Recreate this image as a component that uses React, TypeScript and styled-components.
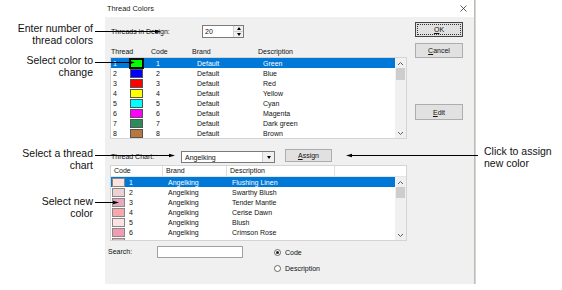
import styled, { createGlobalStyle } from 'styled-components'

const GlobalStyle = createGlobalStyle`
  body {
    margin: 0;
    background: #fff;
  }
`

const uiFont = `'Liberation Sans', Arial, sans-serif`

type Thread = { id: number; color: string; brand: string; name: string }

const threads: Thread[] = [
  { id: 1, color: '#00ff00', brand: 'Default', name: 'Green' },
  { id: 2, color: '#0000ff', brand: 'Default', name: 'Blue' },
  { id: 3, color: '#ff0000', brand: 'Default', name: 'Red' },
  { id: 4, color: '#ffff00', brand: 'Default', name: 'Yellow' },
  { id: 5, color: '#00ffff', brand: 'Default', name: 'Cyan' },
  { id: 6, color: '#ff00ff', brand: 'Default', name: 'Magenta' },
  { id: 7, color: '#2e8b5c', brand: 'Default', name: 'Dark green' },
  { id: 8, color: '#b8783c', brand: 'Default', name: 'Brown' },
]

const chartColors: Thread[] = [
  { id: 1, color: '#fbe4e0', brand: 'Angelking', name: 'Flushing Linen' },
  { id: 2, color: '#ecd2d2', brand: 'Angelking', name: 'Swarthy Blush' },
  { id: 3, color: '#e8a8c0', brand: 'Angelking', name: 'Tender Mantle' },
  { id: 4, color: '#f8a8aa', brand: 'Angelking', name: 'Cerise Dawn' },
  { id: 5, color: '#fce2e0', brand: 'Angelking', name: 'Blush' },
  { id: 6, color: '#f09cb4', brand: 'Angelking', name: 'Crimson Rose' },
  { id: 7, color: '#e8b0b8', brand: 'Angelking', name: 'Sangria Sob' },
]

const Page = styled.div`
  position: relative;
  width: 562px;
  height: 290px;
  display: flex;
  background: #fff;
  font-family: ${uiFont};
  overflow: hidden;
`

const NoteColumn = styled.div<{ $side: 'left' | 'right' }>`
  width: ${(p) => (p.$side === 'left' ? '105px' : 'auto')};
  flex: ${(p) => (p.$side === 'left' ? 'none' : '1')};
  display: flex;
  flex-direction: column;
  align-items: ${(p) => (p.$side === 'left' ? 'flex-end' : 'flex-start')};
  padding: ${(p) => (p.$side === 'left' ? '0 12px 0 0' : '0 0 0 9px')};
  box-sizing: border-box;
`

const Note = styled.div<{ $top: number; $align?: 'left' | 'right' }>`
  margin-top: ${(p) => p.$top}px;
  font-size: 10.5px;
  line-height: 12px;
  color: #111;
  text-align: ${(p) => p.$align ?? 'right'};
  white-space: nowrap;
`

const Leaders = styled.svg`
  position: absolute;
  left: 0;
  top: 0;
  pointer-events: none;
`

const Dialog = styled.div`
  width: 370px;
  height: 284px;
  display: flex;
  flex-direction: column;
  border-right: 1px solid #bdbdbd;
  box-shadow: 1px 0 0 #d8d4c8;
  box-sizing: border-box;
  font-size: 7px;
  color: #111;
`

const TitleBar = styled.div`
  height: 17px;
  flex: none;
  background: #fff;
  display: flex;
  align-items: center;
  justify-content: space-between;
  padding: 0 7px 0 2px;
  font-size: 7.4px;
  color: #222;
`

const Body = styled.div`
  flex: 1;
  background: #f0f0f0;
  display: grid;
  grid-template-columns: 297px 48px;
  column-gap: 8px;
  align-items: start;
  padding: 5px 0 0 5px;
`

const MainColumn = styled.div`
  display: flex;
  flex-direction: column;
`

const ButtonColumn = styled.div`
  display: flex;
  flex-direction: column;
`

const FieldRow = styled.div<{ $top: number; $height: number }>`
  margin-top: ${(p) => p.$top}px;
  height: ${(p) => p.$height}px;
  display: flex;
  align-items: center;
`

const FieldLabel = styled.span<{ $width: number; $shift?: number }>`
  width: ${(p) => p.$width}px;
  margin-left: ${(p) => p.$shift ?? 1}px;
  flex: none;
  white-space: nowrap;
`

const SpinBox = styled.div`
  width: 42px;
  height: 13px;
  box-sizing: border-box;
  border: 1px solid #7a7a7a;
  background: #fff;
  display: flex;
  align-items: center;
  justify-content: space-between;
  padding-left: 2px;
`

const SpinButtons = styled.div`
  width: 9px;
  height: 11px;
  display: flex;
  flex-direction: column;
  border-left: 1px solid #d0d0d0;
  background: #f0f0f0;
`

const SpinHalf = styled.div`
  flex: 1;
  display: flex;
  align-items: center;
  justify-content: center;
  & + & {
    border-top: 1px solid #d0d0d0;
  }
`

const Arrow = styled.span<{ $dir: 'up' | 'down' }>`
  width: 0;
  height: 0;
  border-left: 2.5px solid transparent;
  border-right: 2.5px solid transparent;
  ${(p) =>
    p.$dir === 'up'
      ? 'border-bottom: 3px solid #000;'
      : 'border-top: 3px solid #000;'}
`

const ColumnHeads = styled.div`
  margin-top: 9px;
  height: 10px;
  line-height: 10px;
  display: grid;
  grid-template-columns: 40px 41px 66px 1fr;
  padding-left: 1px;
`

const ListBox = styled.div<{ $height: number; $top?: number }>`
  height: ${(p) => p.$height}px;
  margin-top: ${(p) => p.$top ?? 0}px;
  box-sizing: border-box;
  border: 1px solid #d4d4d4;
  background: #fff;
  display: flex;
  flex-direction: column;
  overflow: hidden;
`

const ListBody = styled.div`
  flex: 1;
  display: flex;
  min-height: 0;
`

const Rows = styled.div`
  flex: 1;
  overflow: hidden;
`

const ThreadRow = styled.div<{ $selected?: boolean }>`
  height: 10px;
  display: grid;
  grid-template-columns: 17px 26px 41px 66px 1fr;
  align-items: center;
  padding-left: 2px;
  background: ${(p) => (p.$selected ? '#0078d7' : 'transparent')};
  color: ${(p) => (p.$selected ? '#fff' : '#111')};
  white-space: nowrap;
`

const Swatch = styled.span<{ $focus?: boolean; $soft?: boolean }>`
  display: block;
  width: 13px;
  height: 9px;
  box-sizing: border-box;
  border: 1px solid ${(p) => (p.$focus ? '#000' : p.$soft ? '#888' : '#555')};
  outline: ${(p) => (p.$focus ? '1px solid #111' : 'none')};
`

const ScrollBar = styled.div`
  width: 11px;
  flex: none;
  background: #f0f0f0;
  display: flex;
  flex-direction: column;
  align-items: center;
`

const ScrollArrow = styled.div`
  height: 10px;
  display: flex;
  align-items: center;
  justify-content: center;
`

const Thumb = styled.div<{ $height: number }>`
  width: 9px;
  height: ${(p) => p.$height}px;
  background: #cdcdcd;
`

const Spacer = styled.div`
  flex: 1;
`

const Combo = styled.div`
  width: 94px;
  height: 12px;
  align-self: flex-end;
  box-sizing: border-box;
  border: 1px solid #7a7a7a;
  background: #fff;
  display: flex;
  align-items: center;
  justify-content: space-between;
  padding-left: 3px;
`

const ComboButton = styled.div`
  width: 11px;
  height: 10px;
  border-left: 1px solid #d0d0d0;
  background: #f0f0f0;
  display: flex;
  align-items: center;
  justify-content: center;
`

const Button = styled.div<{
  $top?: number
  $left?: number
  $width?: number
  $height?: number
  $default?: boolean
}>`
  margin-top: ${(p) => p.$top ?? 0}px;
  margin-left: ${(p) => p.$left ?? 0}px;
  align-self: flex-start;
  width: ${(p) => p.$width ?? 48}px;
  height: ${(p) => p.$height ?? 15}px;
  flex: none;
  box-sizing: border-box;
  border: 1px solid ${(p) => (p.$default ? '#444' : '#adadad')};
  background: #e1e1e1;
  display: flex;
  align-items: center;
  justify-content: center;
  padding: 1px;
  & > span {
    flex: 1;
    align-self: stretch;
    display: flex;
    align-items: center;
    justify-content: center;
    outline: ${(p) => (p.$default ? '1px dotted #333' : 'none')};
    outline-offset: -1px;
  }
`

const GridHead = styled.div`
  height: 10px;
  flex: none;
  display: flex;
  border-bottom: 1px solid #e5e5e5;
  line-height: 10px;
`

const HeadCell = styled.div<{ $width: number }>`
  width: ${(p) => p.$width}px;
  flex: none;
  box-sizing: border-box;
  border-right: 1px solid #e0e0e0;
  padding-left: 3px;
`

const ChartRow = styled.div<{ $selected?: boolean }>`
  height: 10px;
  display: grid;
  grid-template-columns: 51px 64px 1fr;
  align-items: center;
  padding-left: 1px;
  background: ${(p) => (p.$selected ? '#0078d7' : 'transparent')};
  color: ${(p) => (p.$selected ? '#fff' : '#111')};
  white-space: nowrap;
  & > span {
    padding-left: 5px;
  }
`

const CodeCell = styled.div`
  display: flex;
  align-items: center;
  gap: 4px;
`

const TextInput = styled.div`
  width: 86px;
  height: 12px;
  box-sizing: border-box;
  border: 1px solid #a0a0a0;
  background: #fff;
`

const RadioGroup = styled.div`
  margin-left: 31px;
  align-self: flex-start;
  margin-top: 1px;
  display: flex;
  flex-direction: column;
  gap: 6px;
`

const RadioOption = styled.div`
  display: flex;
  align-items: center;
  gap: 4px;
  height: 10px;
`

const RadioDot = styled.span<{ $checked?: boolean }>`
  width: 7px;
  height: 7px;
  box-sizing: border-box;
  border-radius: 50%;
  border: 1px solid #666;
  background: #fff;
  display: flex;
  align-items: center;
  justify-content: center;
  &::after {
    content: '';
    width: 3px;
    height: 3px;
    border-radius: 50%;
    background: ${(p) => (p.$checked ? '#222' : 'transparent')};
  }
`

const Chevron = ({ dir }: { dir: 'up' | 'down' }) => (
  <svg width="7" height="5" viewBox="0 0 7 5">
    <path
      d={dir === 'up' ? 'M1 4 L3.5 1.5 L6 4' : 'M1 1 L3.5 3.5 L6 1'}
      fill="none"
      stroke="#606060"
      strokeWidth="1"
    />
  </svg>
)

const CloseIcon = () => (
  <svg width="7" height="7" viewBox="0 0 7 7">
    <path d="M0.5 0.5 L6.5 6.5 M6.5 0.5 L0.5 6.5" stroke="#333" strokeWidth="0.8" />
  </svg>
)

const Leader = ({ x1, x2, y }: { x1: number; x2: number; y: number }) => {
  const dir = x2 > x1 ? 1 : -1
  return (
    <g>
      <line x1={x1} y1={y} x2={x2 - dir * 3} y2={y} stroke="#000" strokeWidth="1" />
      <path d={`M${x2} ${y} L${x2 - dir * 6} ${y - 1.8} L${x2 - dir * 6} ${y + 1.8} Z`} fill="#000" />
    </g>
  )
}

const App = () => {
  return (
    <Page>
      <GlobalStyle />
      <NoteColumn $side="left">
        <Note $top={22}>
          Enter number of
          <br />
          thread colors
        </Note>
        <Note $top={8}>
          Select color to
          <br />
          change
        </Note>
        <Note $top={69}>
          Select a thread
          <br />
          chart
        </Note>
        <Note $top={24}>
          Select new
          <br />
          color
        </Note>
      </NoteColumn>

      <Dialog>
        <TitleBar>
          <span>Thread Colors</span>
          <CloseIcon />
        </TitleBar>
        <Body>
          <MainColumn>
            <FieldRow $top={3} $height={13}>
              <FieldLabel $width={91}>Threads in Design:</FieldLabel>
              <SpinBox>
                <span>20</span>
                <SpinButtons>
                  <SpinHalf>
                    <Arrow $dir="up" />
                  </SpinHalf>
                  <SpinHalf>
                    <Arrow $dir="down" />
                  </SpinHalf>
                </SpinButtons>
              </SpinBox>
            </FieldRow>

            <ColumnHeads>
              <span>Thread</span>
              <span>Code</span>
              <span>Brand</span>
              <span>Description</span>
            </ColumnHeads>

            <ListBox $height={82}>
              <ListBody>
                <Rows>
                  {threads.map((t, i) => (
                    <ThreadRow key={t.id} $selected={i === 0}>
                      <span>{t.id}</span>
                      <Swatch $focus={i === 0} style={{ background: t.color }} />
                      <span>{t.id}</span>
                      <span>{t.brand}</span>
                      <span>{t.name}</span>
                    </ThreadRow>
                  ))}
                </Rows>
                <ScrollBar>
                  <ScrollArrow>
                    <Chevron dir="up" />
                  </ScrollArrow>
                  <Thumb $height={12} />
                  <Spacer />
                  <ScrollArrow>
                    <Chevron dir="down" />
                  </ScrollArrow>
                </ScrollBar>
              </ListBody>
            </ListBox>

            <FieldRow $top={10} $height={14}>
              <FieldLabel $width={70}>Thread Chart:</FieldLabel>
              <Combo>
                <span>Angelking</span>
                <ComboButton>
                  <Arrow $dir="down" />
                </ComboButton>
              </Combo>
              <Button $left={10} $width={47} $height={13}>
                <span>
                  <u>A</u>ssign
                </span>
              </Button>
            </FieldRow>

            <ListBox $height={76} $top={2}>
              <GridHead>
                <HeadCell $width={52}>Code</HeadCell>
                <HeadCell $width={64}>Brand</HeadCell>
                <HeadCell $width={108}>Description</HeadCell>
              </GridHead>
              <ListBody>
                <Rows>
                  {chartColors.map((c, i) => (
                    <ChartRow key={c.id} $selected={i === 0}>
                      <CodeCell>
                        <Swatch $soft style={{ background: c.color }} />
                        <b style={{ fontWeight: 400 }}>{c.id}</b>
                      </CodeCell>
                      <span>{c.brand}</span>
                      <span>{c.name}</span>
                    </ChartRow>
                  ))}
                </Rows>
                <ScrollBar>
                  <ScrollArrow>
                    <Chevron dir="up" />
                  </ScrollArrow>
                  <Thumb $height={11} />
                  <Spacer />
                  <ScrollArrow>
                    <Chevron dir="down" />
                  </ScrollArrow>
                </ScrollBar>
              </ListBody>
            </ListBox>

            <FieldRow $top={5} $height={28} style={{ alignItems: 'flex-start' }}>
              <FieldLabel $width={49} $shift={-2} style={{ lineHeight: '12px' }}>
                Search:
              </FieldLabel>
              <TextInput />
              <RadioGroup>
                <RadioOption>
                  <RadioDot $checked />
                  <span>Code</span>
                </RadioOption>
                <RadioOption>
                  <RadioDot />
                  <span>Description</span>
                </RadioOption>
              </RadioGroup>
            </FieldRow>
          </MainColumn>

          <ButtonColumn>
            <Button $default>
              <span>
                <u>O</u>K
              </span>
            </Button>
            <Button $top={6}>
              <span>
                <u>C</u>ancel
              </span>
            </Button>
            <Button $top={46} $height={16}>
              <span>
                <u>E</u>dit
              </span>
            </Button>
          </ButtonColumn>
        </Body>
      </Dialog>

      <NoteColumn $side="right">
        <Note $top={145} $align="left">
          Click to assign
          <br />
          new color
        </Note>
      </NoteColumn>

      <Leaders width="562" height="290">
        <Leader x1={95} x2={161} y={31.5} />
        <Leader x1={95} x2={135} y={62.5} />
        <Leader x1={95} x2={175} y={155.5} />
        <Leader x1={95} x2={119} y={202.5} />
        <Leader x1={478} x2={346} y={155.5} />
      </Leaders>
    </Page>
  )
}

export default App
